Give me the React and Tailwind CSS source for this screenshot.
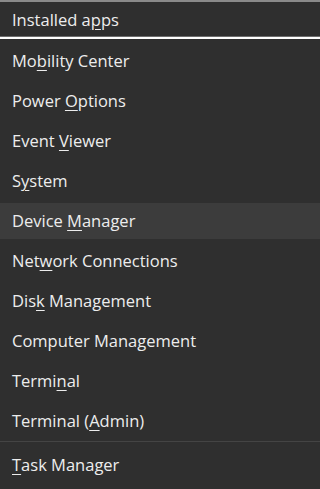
import React from 'react';

const items = [
    { pre: 'Mo', key: 'b', post: 'ility Center' },
    { pre: 'Power ', key: 'O', post: 'ptions' },
    { pre: 'Event ', key: 'V', post: 'iewer' },
    { pre: 'S', key: 'y', post: 'stem' },
    { pre: 'Device ', key: 'M', post: 'anager', hover: true },
    { pre: 'Net', key: 'w', post: 'ork Connections' },
    { pre: 'Dis', key: 'k', post: ' Management' },
    { pre: 'Computer Management', key: '', post: '' },
    { pre: 'Termi', key: 'n', post: 'al' },
    { pre: 'Terminal (', key: 'A', post: 'dmin)' },
];

const Label = ({ item }) => (
    <span>
        {item.pre}
        {item.key && (
            <span className="underline decoration-1 underline-offset-[3px]">{item.key}</span>
        )}
        {item.post}
    </span>
);

const App = () => {
    return (
        <div
            className="w-full min-w-[240px] h-[489px] overflow-hidden bg-[#2f2f2f] text-[#ededed] text-[16.5px]"
            style={{ fontFamily: '"Open Sans", "Noto Sans", sans-serif' }}
        >
            <div className="h-[2px] bg-[#8a8a8a]" />
            <div className="h-[34px] flex items-center pl-[12px] pt-[3px]">
                <span>
                    Installed a<span className="underline decoration-1 underline-offset-[3px]">p</span>ps
                </span>
            </div>
            <div className="h-px bg-[#6e6e6e]" />
            <div className="h-[2px] bg-white" />
            <div className="h-[2px]" />
            {items.map((item, i) => (
                <div key={i} className="h-[40px] py-[2px]">
                    <div
                        className={`h-full flex items-center pl-[12px] ${item.hover ? 'bg-[#3c3c3c]' : ''}`}
                    >
                        <Label item={item} />
                    </div>
                </div>
            ))}
            <div className="h-px bg-[#444444]" />
            <div className="h-[46px] flex items-center pl-[12px]">
                <span>
                    <span className="underline decoration-1 underline-offset-[3px]">T</span>ask Manager
                </span>
            </div>
        </div>
    );
};

export default App;
